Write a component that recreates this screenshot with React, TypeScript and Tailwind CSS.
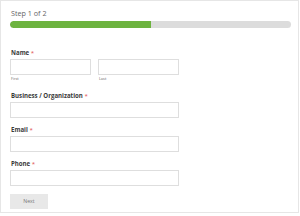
export default function App() {
  return (
    <div className="w-[300px] h-[216px] bg-white" style={{ fontFamily: '"Open Sans", sans-serif' }}>
      <div className="w-[299px] h-[213px] border border-[#e6e6e6] pl-[9px] pr-[7px] pt-[5px]">
        <div className="pl-[1px] text-[7.2px] leading-[14px] text-[#666]">Step 1 of 2</div>
        <div className="mt-[1px] h-[7px] w-[281px] rounded-full bg-[#dcdcdc] overflow-hidden">
          <div className="h-full w-[141px] bg-[#6db33f] rounded-l-full" />
        </div>

        <div className="mt-[19px] pl-[1px] text-[6.1px] leading-[12px] font-bold text-[#3a3a3a]">
          Name <span className="text-[#e04b4b] font-normal">*</span>
        </div>
        <div className="flex gap-[7px]">
          <div className="w-[81px]">
            <div className="h-[16px] border border-[#dedede]" />
            <div className="pl-[1px] text-[3.8px] leading-[8px] text-[#666]">First</div>
          </div>
          <div className="w-[81px]">
            <div className="h-[16px] border border-[#dedede]" />
            <div className="pl-[1px] text-[3.8px] leading-[8px] text-[#666]">Last</div>
          </div>
        </div>

        <div className="mt-[7px] pl-[1px] text-[6.1px] leading-[12px] font-bold text-[#3a3a3a]">
          Business / Organization <span className="text-[#e04b4b] font-normal">*</span>
        </div>
        <div className="h-[16px] w-[169px] border border-[#dedede]" />

        <div className="mt-[6px] pl-[1px] text-[6.1px] leading-[12px] font-bold text-[#3a3a3a]">
          Email <span className="text-[#e04b4b] font-normal">*</span>
        </div>
        <div className="h-[16px] w-[169px] border border-[#dedede]" />

        <div className="mt-[6px] pl-[1px] text-[6.1px] leading-[12px] font-bold text-[#3a3a3a]">
          Phone <span className="text-[#e04b4b] font-normal">*</span>
        </div>
        <div className="h-[16px] w-[169px] border border-[#dedede]" />

        <button className="mt-[8px] h-[15px] w-[38px] bg-[#e8e8e8] text-[5.2px] text-[#777] flex items-center justify-center">
          Next
        </button>
      </div>
    </div>
  );
}
